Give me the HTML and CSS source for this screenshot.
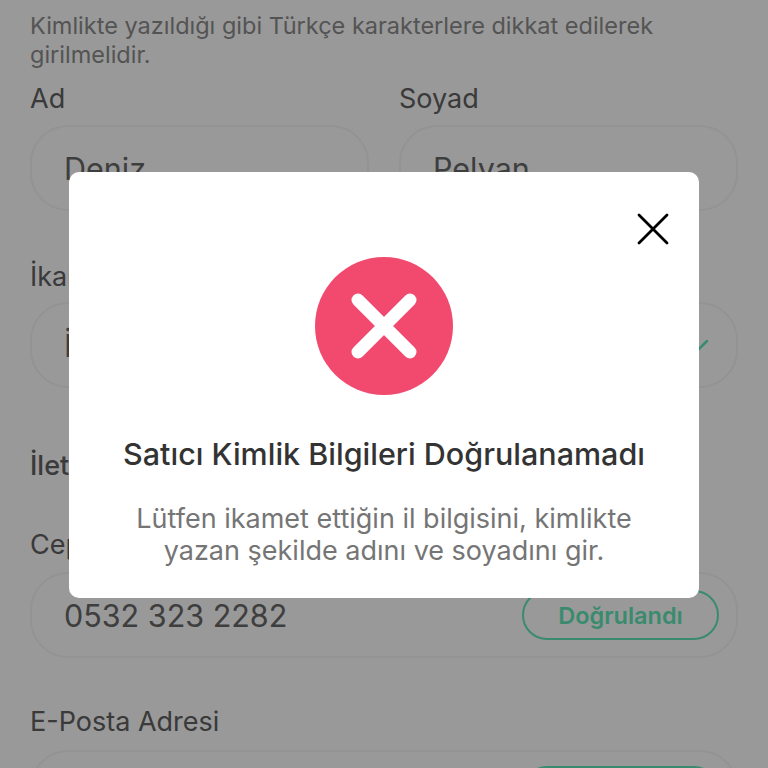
FILE: index.html
```html
<!DOCTYPE html>
<html lang="tr">
<head>
<meta charset="utf-8">
<meta name="viewport" content="width=device-width, initial-scale=1.0">
<title>Satıcı Kimlik Bilgileri</title>
<link rel="stylesheet" href="styles.css">
</head>
<body>

<div class="container">
    <p class="hint">Kimlikte yazıldığı gibi Türkçe karakterlere dikkat edilerek girilmelidir.</p>
    <div class="row">
        <div class="col">
            <label class="label-first">Ad</label>
            <div class="field">Deniz</div>
        </div>
        <div class="col">
            <label class="label-first">Soyad</label>
            <div class="field">Pelvan</div>
        </div>
    </div>
    <label class="label-city">İkamet Edilen İl</label>
    <div class="field field-select">
        İstanbul
        <svg class="chevron" width="20" height="12" viewBox="0 0 20 12"><path d="M2 2l8 8 8-8" fill="none" stroke="#62e8b8" stroke-width="2.5" stroke-linecap="round"/></svg>
    </div>
    <h2 class="section">İletişim Bilgileri</h2>
    <label class="label-phone">Cep Telefonu</label>
    <div class="field field-action">
        0532 323 2282
        <span class="verified">Doğrulandı</span>
    </div>
    <label class="label-mail">E-Posta Adresi</label>
    <div class="field field-mail">
        <span class="verified"></span>
    </div>
</div>

<div class="overlay">
    <div class="modal">
        <button class="close" aria-label="Kapat">
            <svg width="32" height="32" viewBox="0 0 32 32"><path d="M2 2l28 28M30 2L2 30" fill="none" stroke="#000" stroke-width="2.8" stroke-linecap="round"/></svg>
        </button>
        <svg class="error-icon" width="138" height="138" viewBox="0 0 138 138">
            <circle cx="69" cy="69" r="69" fill="#f2496f"/>
            <path d="M43 43l52 52M95 43L43 95" fill="none" stroke="#fff" stroke-width="13" stroke-linecap="round"/>
        </svg>
        <h1 class="modal-title">Satıcı Kimlik Bilgileri Doğrulanamadı</h1>
        <p class="modal-text">Lütfen ikamet ettiğin il bilgisini, kimlikte<br>yazan şekilde adını ve soyadını gir.</p>
    </div>
</div>

</body>
</html>
```

FILE: styles.css
```css
* {
    box-sizing: border-box;
}
html, body {
    margin: 0;
    height: 100%;
    overflow: hidden;
}
body {
    font-family: Inter, "Noto Sans", sans-serif;
    background-color: white;
    color: #5e5e5e;
}
.container {
    height: 768px;
    overflow: hidden;
    padding: 11px 30px 0;
}
.hint {
    margin: 0;
    font-size: 23.5px;
    line-height: 29px;
    color: #8c8c8c;
}
label, .section {
    display: block;
    font-size: 27px;
    line-height: 32px;
    color: #616161;
}
.label-first {
    margin-top: 14px;
    margin-bottom: 10px;
}
.row {
    display: flex;
    gap: 30px;
}
.col {
    flex: 1;
}
.field {
    position: relative;
    display: flex;
    align-items: center;
    justify-content: space-between;
    height: 86px;
    padding: 0 17px 0 32px;
    border: 2px solid #f5f5f5;
    border-radius: 38px;
    font-size: 30.5px;
    color: #686868;
}
.field-mail {
    align-items: flex-start;
    justify-content: flex-end;
    padding-top: 14px;
}
.label-city {
    margin-top: 50px;
    margin-bottom: 9px;
}
.chevron {
    margin-right: 10px;
}
.section {
    margin: 62px 0 0;
    font-weight: 500;
}
.label-phone {
    margin-top: 47px;
    margin-bottom: 11px;
}
.label-mail {
    margin-top: 48px;
    margin-bottom: 12px;
}
.verified {
    display: flex;
    flex: none;
    align-items: center;
    justify-content: center;
    width: 197px;
    height: 50px;
    border: 2px solid #62e8b8;
    border-radius: 25px;
    font-size: 23.5px;
    font-weight: 600;
    color: #62e8b8;
}
.overlay {
    position: fixed;
    inset: 0;
    display: flex;
    align-items: center;
    justify-content: center;
    padding-top: 2px;
    background-color: rgba(0, 0, 0, 0.4);
}
.modal {
    position: relative;
    display: flex;
    flex-direction: column;
    align-items: center;
    width: 630px;
    height: 426px;
    padding-top: 85px;
    border-radius: 10px;
    background-color: white;
    text-align: center;
}
.close {
    position: absolute;
    top: 41px;
    right: 30px;
    padding: 0;
    border: 0;
    background: none;
    line-height: 0;
}
.error-icon {
    flex: none;
}
.modal-title {
    margin: 41px 0 0;
    font-size: 30.5px;
    line-height: 36px;
    font-weight: 500;
    color: #333;
}
.modal-text {
    margin: 31px 0 0;
    font-size: 27px;
    line-height: 32px;
    color: #757575;
}
```
